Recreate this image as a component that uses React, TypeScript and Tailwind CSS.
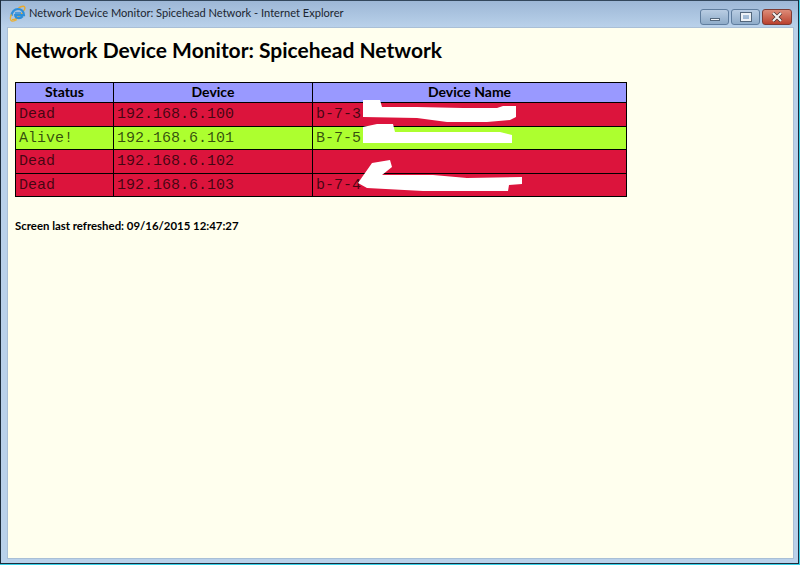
const rows = [
  { status: 'Dead', ip: '192.168.6.100', name: 'b-7-3', alive: false },
  { status: 'Alive!', ip: '192.168.6.101', name: 'B-7-5', alive: true },
  { status: 'Dead', ip: '192.168.6.102', name: '', alive: false },
  { status: 'Dead', ip: '192.168.6.103', name: 'b-7-4', alive: false },
];

function IeLogo() {
  return (
    <svg width="18" height="18" viewBox="0 0 18 18" fill="none">
      <path d="M3 14.5c3 .8 9-3.5 12.5-10 .8-1.700.5-3-1-3.200-1.500-.2-3.500.6-5 1.600" stroke="#e8a92c" strokeWidth="1.400" />
      <path d="M2.500 11c0-4 3-7 6.500-7s6 2.800 6 6.200H6.200c.2 3.300 5 3.800 7.500 1" stroke="#2f8fd8" strokeWidth="2.200" />
      <path d="M6 8h6" stroke="#2f8fd8" strokeWidth="1.500" />
      <path d="M2.500 9.500C1 12.500 1 15.500 3 16c1.500.3 3.500-.5 5-1.500" stroke="#e8b23a" strokeWidth="1.400" />
    </svg>
  );
}

function WindowButtons() {
  return (
    <div className="flex gap-[2px] mt-[6px] items-start">
      <div className="w-[29px] h-[16px] rounded-[3px] border border-[#5f7d9e] bg-gradient-to-b from-[#b9cde3] to-[#8facc9] flex items-end justify-center pb-[3px]">
        <div className="w-[10px] h-[3px] bg-[#eef2f6] border border-[#53677c]" />
      </div>
      <div className="w-[29px] h-[16px] rounded-[3px] border border-[#5f7d9e] bg-gradient-to-b from-[#b9cde3] to-[#8facc9] flex items-center justify-center">
        <div className="w-[10px] h-[8px] border-2 border-[#eef2f6] outline outline-1 outline-[#53677c]" />
      </div>
      <div className="w-[30px] h-[16px] rounded-[3px] border border-[#7d3b33] bg-gradient-to-b from-[#dd8b78] to-[#b9402d] flex items-center justify-center">
        <svg width="12" height="10" viewBox="0 0 12 10">
          <path d="M2 1l8 8M10 1L2 9" stroke="#3c2a2a" strokeWidth="3.400" />
          <path d="M2 1l8 8M10 1L2 9" stroke="#f4f0ee" strokeWidth="2.200" />
        </svg>
      </div>
    </div>
  );
}

export default function App() {
  return (
    <div className="w-[800px] h-[565px] relative overflow-hidden flex border-r border-b border-r-[#35d0e8] border-b-[#35d0e8]">
      <div className="flex-1 flex flex-col bg-[#b9d1ea] border border-t-0 border-[#1c2c3c]">
        <div className="h-[27px] shrink-0 flex items-center justify-between pl-[8px] pr-[6px] pb-[1px] bg-gradient-to-b from-[#9db7d6] to-[#b9d1ea] border-t border-[#33475c]">
          <div className="flex items-center gap-[2px]">
            <IeLogo />
            <span className="text-[11.100px] text-[#1b2530] font-['Lato',sans-serif]">Network Device Monitor: Spicehead Network - Internet Explorer</span>
          </div>
          <WindowButtons />
        </div>

        <div className="flex-1 ml-[6px] mr-[4px] mb-[4px] bg-[#ffffee] pl-[7px] pt-[8px] border border-[#a9bfd6] font-['Lato',sans-serif] text-black">
          <h1 className="text-[21px] leading-[27px] font-bold">Network Device Monitor: Spicehead Network</h1>

          <table className="mt-[19px] w-[612px] table-fixed border-collapse border border-black">
            <thead>
              <tr className="h-[20px] bg-[#9999ff] text-[14px] leading-[16px] font-bold">
                <th className="w-[98px] border border-black pt-0 pb-[2px] px-0">Status</th>
                <th className="w-[199px] border border-black pt-0 pb-[2px] px-0">Device</th>
                <th className="border border-black pt-0 pb-[2px] px-0">Device Name</th>
              </tr>
            </thead>
            <tbody>
              {rows.map((row) => (
                <tr key={row.ip} className={row.alive ? 'h-[23.500px] bg-[#adff2f]' : 'h-[23.500px] bg-[#dc143c]'}>
                  {[row.status, row.ip, row.name].map((cell, i) => (
                    <td key={i} className="border border-black pl-[3px] pr-[2px] pt-[2px] pb-0 text-[15px] leading-[18px] font-['Liberation_Mono',monospace] text-black/70">
                      {cell}
                    </td>
                  ))}
                </tr>
              ))}
            </tbody>
          </table>

          <p className="mt-[21px] text-[11.400px] leading-[16px] font-bold">Screen last refreshed: 09/16/2015 12:47:27</p>
        </div>
      </div>

      {/* white scribbles over the device names */}
      <svg className="absolute left-[355px] top-[95px]" width="175" height="100" viewBox="0 0 175 100" fill="#ffffff">
        <path d="M8 5h17l2 7 35 0 46 1 34 0 6-2 13 0 0 11-6 3-23 2-40 0-30-4-54-1z" />
        <path d="M8 32l14-3h16l2 8 38 0 27 0 40 0 12 3 0 8H8z" />
        <path d="M3 88l14-20 18-3 2 7-10 8 51 0 34 3 55-1 0 7-13 1-1 6H68l-56-3z" />
      </svg>
    </div>
  );
}
